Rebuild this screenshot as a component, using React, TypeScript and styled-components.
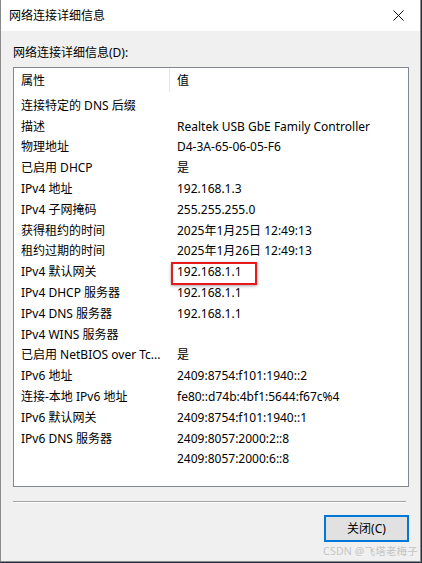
import * as React from 'react';
import styled, { createGlobalStyle } from 'styled-components';

const GlobalStyle = createGlobalStyle`
	html, body {
		margin: 0;
		padding: 0;
		background: #243242;
	}
	body {
		font-family: "Noto Sans", "Noto Sans CJK SC", sans-serif;
		font-size: 12px;
		color: #000;
	}
`;

const Window = styled.div`
	position: relative;
	box-sizing: border-box;
	width: 421px;
	height: 562px;
	display: flex;
	flex-direction: column;
	background: #f0f0f0;
	border: 1px solid #8a8a8a;
	border-top: none;
	overflow: hidden;
`;

const TitleBar = styled.div`
	height: 31px;
	flex: none;
	display: flex;
	align-items: center;
	background: #fff;
	padding-left: 8px;
`;

const Title = styled.div`
	flex: 1;
	line-height: 16px;
	padding-top: 1px;
`;

const CloseButton = styled.div`
	width: 46px;
	height: 31px;
	display: flex;
	align-items: center;
	justify-content: center;
	margin-right: -1px;
`;

const Body = styled.div`
	flex: 1;
	display: flex;
	flex-direction: column;
	padding: 14px 11px 0 12px;
`;

const Label = styled.div`
	line-height: 16px;
	height: 16px;
`;

const ListBox = styled.div`
	box-sizing: border-box;
	margin-top: 6px;
	width: 396px;
	height: 420px;
	background: #fff;
	border: 1px solid #828790;
	overflow: hidden;
`;

const Row = styled.div<{ $header?: boolean }>`
	display: grid;
	grid-template-columns: 156px 1fr;
	height: ${(p) => (p.$header ? '27.5px' : '20.8px')};
	align-items: center;
`;

const Cell = styled.div`
	position: relative;
	height: 100%;
	display: flex;
	align-items: center;
	padding-left: 7px;
	white-space: nowrap;
	overflow: hidden;
	line-height: 16px;
`;

const HeaderCell = styled(Cell)<{ $divider?: boolean }>`
	align-items: flex-start;
	padding-top: 5px;
	box-sizing: border-box;
	border-left: ${(p) => (p.$divider ? '1px solid #e5e5e5' : 'none')};
	margin-left: ${(p) => (p.$divider ? '-1px' : '0')};
	height: 24px;
	align-self: start;
`;

const ValueCell = styled(Cell)`
	overflow: visible;
`;

// red annotation drawn over the gateway value
const Highlight = styled.div`
	position: absolute;
	left: 1px;
	top: 0px;
	width: 86px;
	height: 23px;
	box-sizing: border-box;
	border: 2px solid #e8191b;
	box-shadow: 0 1px 3px rgba(0, 0, 0, 0.35);
	pointer-events: none;
`;

const Separator = styled.div`
	margin-top: 14px;
	width: 393px;
	height: 1px;
	background: #a0a0a0;
	border-bottom: 1px solid #fff;
`;

const Footer = styled.div`
	display: flex;
	justify-content: flex-end;
	width: 396px;
	margin-top: 12px;
`;

const Button = styled.div`
	box-sizing: border-box;
	width: 85px;
	height: 27px;
	display: flex;
	align-items: center;
	justify-content: center;
	background: #e1e1e1;
	border: 2px solid #0078d7;
	line-height: 16px;
`;

const Watermark = styled.div`
	position: absolute;
	right: 2px;
	bottom: 3px;
	font-size: 10.5px;
	line-height: 14px;
	color: #c4c4c4;
	letter-spacing: 0.2px;
`;

type Item = [string, string];

const items: Item[] = [
	['连接特定的 DNS 后缀', ''],
	['描述', 'Realtek USB GbE Family Controller'],
	['物理地址', 'D4-3A-65-06-05-F6'],
	['已启用 DHCP', '是'],
	['IPv4 地址', '192.168.1.3'],
	['IPv4 子网掩码', '255.255.255.0'],
	['获得租约的时间', '2025年1月25日 12:49:13'],
	['租约过期的时间', '2025年1月26日 12:49:13'],
	['IPv4 默认网关', '192.168.1.1'],
	['IPv4 DHCP 服务器', '192.168.1.1'],
	['IPv4 DNS 服务器', '192.168.1.1'],
	['IPv4 WINS 服务器', ''],
	['已启用 NetBIOS over Tc...', '是'],
	['IPv6 地址', '2409:8754:f101:1940::2'],
	['连接-本地 IPv6 地址', 'fe80::d74b:4bf1:5644:f67c%4'],
	['IPv6 默认网关', '2409:8754:f101:1940::1'],
	['IPv6 DNS 服务器', '2409:8057:2000:2::8'],
	['', '2409:8057:2000:6::8'],
];

const CloseIcon = () => (
	<svg width="11" height="11" viewBox="0 0 11 11">
		<path d="M0.5 0.5 L10.5 10.5 M10.5 0.5 L0.5 10.5" stroke="#111" strokeWidth="1" fill="none" />
	</svg>
);

const App = () => {
	return (
		<>
			<GlobalStyle />
			<Window>
				<TitleBar>
					<Title>网络连接详细信息</Title>
					<CloseButton>
						<CloseIcon />
					</CloseButton>
				</TitleBar>
				<Body>
					<Label>网络连接详细信息(D):</Label>
					<ListBox>
						<Row $header>
							<HeaderCell>属性</HeaderCell>
							<HeaderCell $divider>值</HeaderCell>
						</Row>
						{items.map(([name, value], i) => (
							<Row key={i}>
								<Cell>{name}</Cell>
								<ValueCell>
									{value}
									{name === 'IPv4 默认网关' && <Highlight />}
								</ValueCell>
							</Row>
						))}
					</ListBox>
					<Separator />
					<Footer>
						<Button>关闭(C)</Button>
					</Footer>
				</Body>
				<Watermark>CSDN @飞塔老梅子</Watermark>
			</Window>
		</>
	);
};

export default App;
